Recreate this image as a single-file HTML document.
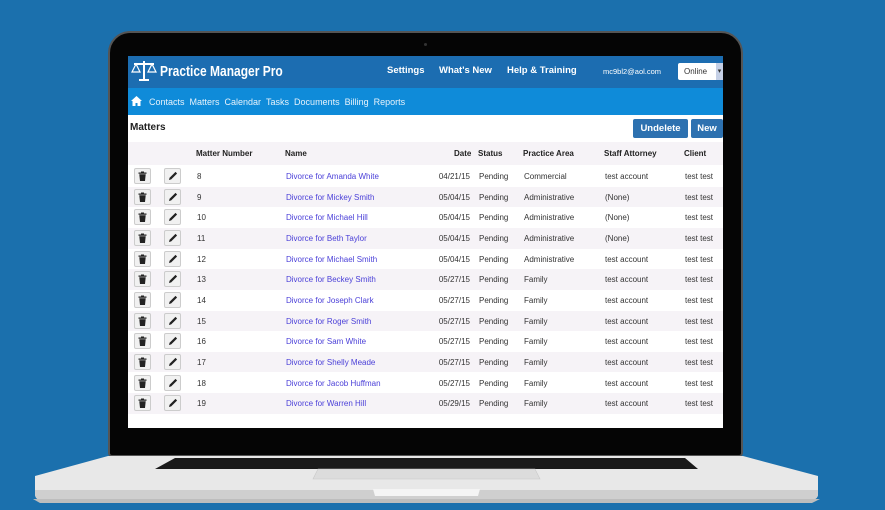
<!DOCTYPE html>
<html><head><style>
*{margin:0;padding:0;box-sizing:border-box}
body{width:885px;height:510px;background:#1b70ad;position:relative;overflow:hidden;font-family:"Liberation Sans",sans-serif}
.bezel{position:absolute;left:108px;top:31px;width:635px;height:426px;background:#050505;border-radius:22px 22px 4px 4px;border:2px solid #555}
.screen{position:absolute;left:128px;top:56px;width:595px;height:372px;background:#fff;overflow:hidden}
.hdr{position:absolute;left:0;top:0;width:595px;height:32px;background:#1c6db1;color:#fff}
.nav{position:absolute;left:0;top:32px;width:595px;height:27px;background:#0f8bd9;color:#e6f2fb;font-size:9px}
.abs{position:absolute;white-space:nowrap}
.btn{position:absolute;background:#2d71b0;color:#fff;font-size:9.5px;font-weight:bold;text-align:center;line-height:19px;height:19px;border-radius:2px}
.row{position:absolute;left:0;width:595px;height:20.6px;font-size:8px;color:#333}
.row span{position:absolute;top:6px;white-space:nowrap}
.ib{position:absolute;top:2px;width:17px;height:16px;background:#f1f1f1;border:1px solid #ccc;border-radius:2px}
.ib svg{position:absolute;left:3px;top:2px}
.lk{color:#4a3fd8}
</style></head><body>
<div class="bezel"></div>
<div style="position:absolute;left:424px;top:43px;width:3px;height:3px;background:#333;border-radius:50%"></div>
<div class="screen">
 <div class="hdr">
  <svg class="abs" style="left:3px;top:3px" width="26" height="24" viewBox="0 0 26 24"><g fill="none" stroke="#fff" stroke-width="2"><line x1="13" y1="2" x2="13" y2="20"/><line x1="3" y1="5" x2="23" y2="5"/><line x1="8" y1="21" x2="18" y2="21"/><path d="M5 5 L1 13 H9 Z M21 5 L17 13 H25 Z" stroke-width="1.2"/></g></svg>
  <div class="abs" style="left:32px;top:7px;font-size:15px;font-weight:bold;transform:scaleX(.8);transform-origin:left">Practice Manager Pro</div>
  <div class="abs" style="left:259px;top:9px;font-size:9.5px;font-weight:bold">Settings</div>
  <div class="abs" style="left:311px;top:9px;font-size:9.5px;font-weight:bold">What's New</div>
  <div class="abs" style="left:379px;top:9px;font-size:9.5px;font-weight:bold">Help &amp; Training</div>
  <div class="abs" style="left:475px;top:11px;font-size:7.5px">mc9bl2@aol.com</div>
  <div class="abs" style="left:550px;top:7px;width:45px;height:17px;background:#fff;border-radius:2px;color:#333;font-size:8px;padding:4px 6px">Online<span style="position:absolute;right:0;top:0;width:7px;height:17px;background:#c5d0e6;font-size:7px;line-height:17px;text-align:center">▾</span></div>
 </div>
 <div class="nav">
  <svg class="abs" style="left:3px;top:8px" width="11" height="10" viewBox="0 0 11 10"><path d="M5.5 0 L11 5 H9.5 V10 H6.5 V7 H4.5 V10 H1.5 V5 H0 Z" fill="#fff"/></svg>
  <div class="abs" style="left:21px;top:9px">Contacts &nbsp;Matters &nbsp;Calendar &nbsp;Tasks &nbsp;Documents &nbsp;Billing &nbsp;Reports</div>
 </div>
 <div class="abs" style="left:2px;top:66px;font-size:10px;font-weight:bold;color:#222">Matters</div>
 <div class="btn" style="left:505px;top:63px;width:55px">Undelete</div>
 <div class="btn" style="left:563px;top:63px;width:32px">New</div>
 <div class="row" style="top:86px;height:23px;background:#f6f3f7;font-weight:bold;color:#222"><span style="left:68px;top:7px">Matter Number</span><span style="left:157px;top:7px">Name</span><span style="left:326px;top:7px">Date</span><span style="left:350px;top:7px">Status</span><span style="left:395px;top:7px">Practice Area</span><span style="left:476px;top:7px">Staff Attorney</span><span style="left:556px;top:7px">Client</span></div>
 <div id="rows"></div>
</div>
<svg class="abs" style="left:0;top:450px" width="885" height="60" viewBox="0 0 885 60">
 <path d="M108 6 L743 6 L818 26 L818 44 Q818 50 810 50 L42 50 Q35 50 35 44 L35 26 Z" fill="#e8e8e8"/>
 <path d="M35 40 L818 40 L818 44 Q818 50 810 50 L42 50 Q35 50 35 44 Z" fill="#cfcfcf"/>
 <path d="M33 49 L820 49 L812 53 L40 53 Z" fill="#bdbdbd"/>
 <path d="M175 8 L685 8 L698 19 L155 19 Z" fill="#1a1a1a"/>
 <path d="M318 19 L535 19 L540 29 L313 29 Z" fill="#dcdcdc" stroke="#c8c8c8" stroke-width=".6"/>
 <path d="M373 39 L480 39 L478 46 L375 46 Z" fill="#f4f4f4"/>
</svg>
<script>
var d=[["8","Amanda White","04/21/15","Commercial","test account"],["9","Mickey Smith","05/04/15","Administrative","(None)"],["10","Michael Hill","05/04/15","Administrative","(None)"],["11","Beth Taylor","05/04/15","Administrative","(None)"],["12","Michael Smith","05/04/15","Administrative","test account"],["13","Beckey Smith","05/27/15","Family","test account"],["14","Joseph Clark","05/27/15","Family","test account"],["15","Roger Smith","05/27/15","Family","test account"],["16","Sam White","05/27/15","Family","test account"],["17","Shelly Meade","05/27/15","Family","test account"],["18","Jacob Huffman","05/27/15","Family","test account"],["19","Warren Hill","05/29/15","Family","test account"]];
var tr='<svg width="9" height="10" viewBox="0 0 9 10"><path d="M3 0.5h3v1H3z M0.5 1.5h8v1.3h-8z M1.3 3.2h6.4L7 10H2z" fill="#222"/></svg>';
var pe='<svg width="10" height="10" viewBox="0 0 10 10"><path d="M1 9 L1.6 6.8 L7.5 0.9 L9.1 2.5 L3.2 8.4 Z" fill="#222"/></svg>';
var h="";d.forEach(function(r,i){h+='<div class="row" style="top:'+(110+i*20.65)+'px;background:'+(i%2?'#f6f3f7':'#fff')+'"><div class="ib" style="left:6px">'+tr+'</div><div class="ib" style="left:36px">'+pe+'</div><span style="left:69px">'+r[0]+'</span><span class="lk" style="left:158px">Divorce for '+r[1]+'</span><span style="right:253px">'+r[2]+'</span><span style="left:351px">Pending</span><span style="left:396px">'+r[3]+'</span><span style="left:477px">'+r[4]+'</span><span style="left:557px">test test</span></div>'});
document.getElementById("rows").innerHTML=h;
</script>
</body></html>
